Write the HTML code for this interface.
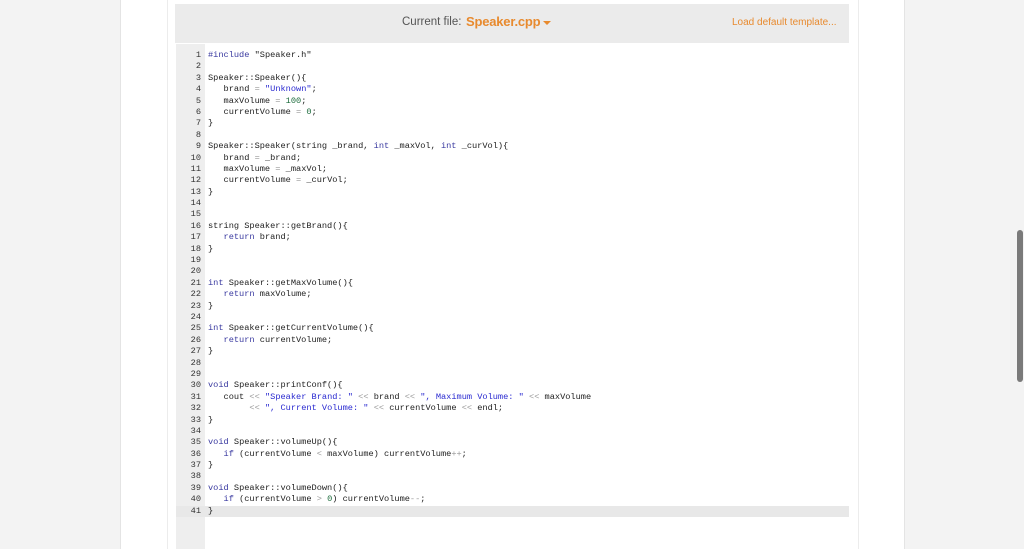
<!DOCTYPE html><html><head><style>
body{margin:0;width:1024px;height:549px;background:#f3f3f3;position:relative;overflow:hidden;font-family:"Liberation Sans",sans-serif}
.col{position:absolute;left:120px;top:0;width:783px;height:549px;background:#fff;border-left:1px solid #e4e4e4;border-right:1px solid #e4e4e4}
.inner{position:absolute;left:167px;top:0;width:690px;height:549px;border-left:1px solid #ececec;border-right:1px solid #ececec}
.hdr{position:absolute;left:175px;top:4px;width:674px;height:39px;background:#ebebeb}
.cf{position:absolute;left:402px;top:16px;font-size:11.5px;color:#555}
.fn{position:absolute;left:466px;top:14px;font-size:13px;color:#e88a2e;font-weight:bold;letter-spacing:-0.2px}
.ar{position:absolute;left:543px;top:21px;width:0;height:0;border-left:4px solid transparent;border-right:4px solid transparent;border-top:4px solid #e88a2e}
.ld{position:absolute;left:732px;top:17px;font-size:10px;color:#e88a2e}
.gut{position:absolute;left:176px;top:44px;width:29px;height:505px;background:#eeeeee}
.ed{position:absolute;left:205px;top:44px;width:644px;height:475px;background:#fff}
.code{position:absolute;left:176px;top:50px;font-family:"Liberation Mono",monospace;font-size:8.65px;line-height:11.4px;color:#222}
.code div{height:11.4px;white-space:pre}
.n{display:inline-block;width:25px;text-align:right;color:#333;margin-right:7px}
.k{color:#3a3aa0}.s{color:#2a2ad0}.d{color:#1a6a3a}.o{color:#999}
.cur{background:#e8e8e8;width:673px}
.sb{position:absolute;left:1017px;top:230px;width:6px;height:152px;background:#7a7a7a;border-radius:3px}
</style></head><body>
<div class="col"></div><div class="inner"></div>
<div class="hdr"></div>
<div class="cf">Current file:</div><div class="fn">Speaker.cpp</div><div class="ar"></div>
<div class="ld">Load default template...</div>
<div class="gut"></div><div class="ed"></div>
<div class="code"><div><span class="n">1</span><span class="k">#include</span> "Speaker.h"</div><div><span class="n">2</span></div><div><span class="n">3</span>Speaker::Speaker(){</div><div><span class="n">4</span>   brand <span class="o">=</span> <span class="s">"Unknown"</span>;</div><div><span class="n">5</span>   maxVolume <span class="o">=</span> <span class="d">100</span>;</div><div><span class="n">6</span>   currentVolume <span class="o">=</span> <span class="d">0</span>;</div><div><span class="n">7</span>}</div><div><span class="n">8</span></div><div><span class="n">9</span>Speaker::Speaker(string _brand, <span class="k">int</span> _maxVol, <span class="k">int</span> _curVol){</div><div><span class="n">10</span>   brand <span class="o">=</span> _brand;</div><div><span class="n">11</span>   maxVolume <span class="o">=</span> _maxVol;</div><div><span class="n">12</span>   currentVolume <span class="o">=</span> _curVol;</div><div><span class="n">13</span>}</div><div><span class="n">14</span></div><div><span class="n">15</span></div><div><span class="n">16</span>string Speaker::getBrand(){</div><div><span class="n">17</span>   <span class="k">return</span> brand;</div><div><span class="n">18</span>}</div><div><span class="n">19</span></div><div><span class="n">20</span></div><div><span class="n">21</span><span class="k">int</span> Speaker::getMaxVolume(){</div><div><span class="n">22</span>   <span class="k">return</span> maxVolume;</div><div><span class="n">23</span>}</div><div><span class="n">24</span></div><div><span class="n">25</span><span class="k">int</span> Speaker::getCurrentVolume(){</div><div><span class="n">26</span>   <span class="k">return</span> currentVolume;</div><div><span class="n">27</span>}</div><div><span class="n">28</span></div><div><span class="n">29</span></div><div><span class="n">30</span><span class="k">void</span> Speaker::printConf(){</div><div><span class="n">31</span>   cout <span class="o">&lt;&lt;</span> <span class="s">"Speaker Brand: "</span> <span class="o">&lt;&lt;</span> brand <span class="o">&lt;&lt;</span> <span class="s">", Maximum Volume: "</span> <span class="o">&lt;&lt;</span> maxVolume</div><div><span class="n">32</span>        <span class="o">&lt;&lt;</span> <span class="s">", Current Volume: "</span> <span class="o">&lt;&lt;</span> currentVolume <span class="o">&lt;&lt;</span> endl;</div><div><span class="n">33</span>}</div><div><span class="n">34</span></div><div><span class="n">35</span><span class="k">void</span> Speaker::volumeUp(){</div><div><span class="n">36</span>   <span class="k">if</span> (currentVolume <span class="o">&lt;</span> maxVolume) currentVolume<span class="o">++</span>;</div><div><span class="n">37</span>}</div><div><span class="n">38</span></div><div><span class="n">39</span><span class="k">void</span> Speaker::volumeDown(){</div><div><span class="n">40</span>   <span class="k">if</span> (currentVolume <span class="o">&gt;</span> <span class="d">0</span>) currentVolume<span class="o">--</span>;</div><div class="cur"><span class="n">41</span>}</div></div>
<div class="sb"></div>
</body></html>
